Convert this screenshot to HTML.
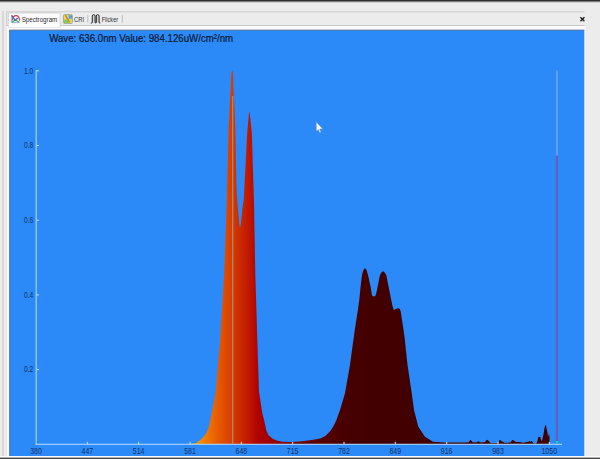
<!DOCTYPE html>
<html><head><meta charset="utf-8"><title>Spectrogram</title>
<style>
html,body{margin:0;padding:0;}
body{width:600px;height:459px;overflow:hidden;background:#ececec;position:relative;font-family:"Liberation Sans",sans-serif;}
svg{position:absolute;left:0;top:0;display:block}
svg text{font-family:"Liberation Sans",sans-serif;}
</style></head><body>
<svg width="600" height="459" viewBox="0 0 600 459" style="opacity:0.999">
<defs>
<linearGradient id="sg" gradientUnits="userSpaceOnUse" x1="190" y1="0" x2="550" y2="0"><stop offset="0.0000" stop-color="rgb(255, 190, 0)"/><stop offset="0.0278" stop-color="rgb(245, 140, 0)"/><stop offset="0.0556" stop-color="rgb(240, 110, 0)"/><stop offset="0.0833" stop-color="rgb(228, 85, 0)"/><stop offset="0.1167" stop-color="rgb(215, 60, 0)"/><stop offset="0.1389" stop-color="rgb(203, 42, 0)"/><stop offset="0.1667" stop-color="rgb(190, 20, 0)"/><stop offset="0.1889" stop-color="rgb(175, 2, 0)"/><stop offset="0.2083" stop-color="rgb(165, 0, 0)"/><stop offset="0.2500" stop-color="rgb(140, 0, 0)"/><stop offset="0.3056" stop-color="rgb(110, 0, 0)"/><stop offset="0.3611" stop-color="rgb(88, 0, 0)"/><stop offset="0.4028" stop-color="rgb(78, 0, 0)"/><stop offset="0.4444" stop-color="rgb(70, 0, 0)"/><stop offset="0.5278" stop-color="rgb(66, 0, 0)"/><stop offset="1.0000" stop-color="rgb(64, 0, 0)"/></linearGradient>
</defs>
<!-- window chrome -->
<rect x="0" y="0" width="600" height="459" fill="#ececec"/>
<rect x="0" y="0" width="600" height="1.6" fill="#2e2e2e"/>
<rect x="0" y="1.6" width="600" height="1" fill="#8a8a8a" opacity="0.5"/>
<!-- left splitter -->
<rect x="2.5" y="11" width="1" height="448" fill="#c4c4c4"/>
<!-- panel frame -->
<rect x="6" y="11.3" width="578.4" height="1.1" fill="#d0d0d0"/>
<rect x="6" y="11.3" width="1.2" height="446" fill="#d0d0d0"/>
<rect x="6.5" y="25.5" width="578" height="4.5" fill="#fafafa"/>
<rect x="6.5" y="25" width="578" height="1" fill="#c8c8c8"/>
<rect x="6.5" y="26" width="2.5" height="433" fill="#fafafa"/>
<!-- active tab -->
<rect x="8.3" y="13" width="51.7" height="14" fill="#fcfcfc" stroke="#cccccc" stroke-width="0.8"/>
<rect x="8.7" y="24" width="50.9" height="3" fill="#fcfcfc"/>
<!-- tab icons -->
<g fill="none">
<path d="M11.4 15 L11.4 22.6 L19.6 22.6" stroke="#8fb0e8" stroke-width="0.9"/>
<path d="M12.4 20.4 C13.2 14.2,18.6 13.8,19.8 20.6" stroke="#e03838" stroke-width="1.2"/>
<path d="M11.6 15.4 L15.2 20.4 L17.8 17.8" stroke="#2c5ccc" stroke-width="1.2"/>
<path d="M12 22.3 L15.6 19.8 L19.2 22.4" stroke="#2aa048" stroke-width="1.1"/>
</g>
<g>
<rect x="63.4" y="14.6" width="9" height="8.8" rx="1" fill="#dfe070" stroke="#8f9c88" stroke-width="0.8"/>
<path d="M64 23 L64 19.5 L67.5 19.8 L69 23 Z" fill="#86c860"/>
<rect x="68.6" y="15.2" width="3.4" height="3.6" fill="#5a9ee8"/>
<path d="M70 19 L72 19 L72 23 L69.4 23 Z" fill="#c8dc68"/>
<path d="M65.5 15.6 L69.2 21.6" stroke="#e87820" stroke-width="1.5" fill="none" stroke-linecap="round"/>
</g>
<rect x="92.6" y="15.6" width="2.6" height="7.4" fill="#d4d4d4"/><rect x="96.3" y="15.6" width="2.6" height="7.4" fill="#d4d4d4"/><path d="M90.8 23 H91.7 Q92.3 23 92.3 22.2 V16.1 Q92.3 14.7 93.6 14.7 H93.8 Q95.1 14.7 95.1 16.1 V22.2 Q95.1 23 95.7 23 Q96.3 23 96.3 22.2 V16.1 Q96.3 14.7 97.6 14.7 H97.8 Q99.1 14.7 99.1 16.1 V22.2 Q99.1 23 99.7 23 H100.4" fill="none" stroke="#1c1c1c" stroke-width="0.95" stroke-linejoin="round"/>
<g font-size="7.1px" fill="#2c2c30">
<text x="21.7" y="21.5" textLength="35.6" lengthAdjust="spacingAndGlyphs">Spectrogram</text>
<text x="74" y="21.5" textLength="10" lengthAdjust="spacingAndGlyphs">CRI</text>
<text x="101.7" y="21.5" textLength="16.4" lengthAdjust="spacingAndGlyphs">Flicker</text>
</g>
<rect x="87.2" y="15" width="1.2" height="7.5" fill="#c4c4c4"/>
<rect x="121.8" y="15" width="1.2" height="7.5" fill="#c4c4c4"/>
<!-- close x -->
<path d="M580.4 17.2 L584.4 21.2 M584.4 17.2 L580.4 21.2" stroke="#151515" stroke-width="1.3" fill="none"/>
<!-- right side -->
<rect x="584.3" y="26" width="1.2" height="433" fill="#fafafa"/>
<!-- chart -->
<rect x="9.5" y="30" width="574.8" height="426" fill="#2b8af7"/>
<rect x="9.3" y="29.6" width="575" height="0.9" fill="#6a7890"/>
<rect x="0" y="456" width="600" height="1.7" fill="#fbfbfb"/>
<rect x="0" y="457.6" width="600" height="1.4" fill="#484848"/>
<rect x="9.3" y="30" width="0.8" height="426" fill="#4a6898"/>
<!-- title -->
<text x="49.2" y="41.9" font-size="10.3px" fill="#0a1834" stroke="#0a1834" stroke-width="0.2" textLength="184" lengthAdjust="spacingAndGlyphs">Wave: 636.0nm Value: 984.126uW/cm²/nm</text>
<!-- spectrum -->
<polygon points="188.00,444.30 190.00,444.00 196.00,443.30 200.30,440.00 203.50,437.00 206.30,433.30 209.00,426.70 211.70,413.30 214.30,400.00 215.80,391.80 220.20,340.00 224.20,273.00 226.70,206.00 228.50,133.00 230.00,101.00 230.50,92.00 230.90,82.00 231.30,74.00 231.80,70.90 232.70,70.90 233.10,76.00 233.30,88.00 233.80,96.00 234.40,106.00 235.30,127.00 236.50,190.00 238.00,210.00 239.50,226.00 240.00,228.00 240.80,224.00 242.70,206.00 243.70,200.00 247.20,133.00 248.50,118.00 249.30,110.80 250.50,120.00 251.80,133.00 254.00,203.00 255.30,273.00 257.40,343.00 259.00,391.80 260.30,400.00 262.30,413.30 264.00,419.50 266.20,430.00 268.50,435.20 273.00,439.00 277.50,440.80 282.00,441.70 291.00,442.00 300.00,441.40 306.00,440.80 315.00,439.40 321.00,438.20 325.50,435.70 330.00,431.50 333.00,427.00 336.00,421.00 338.20,415.00 340.00,410.00 345.00,393.30 350.00,364.75 352.00,350.00 353.75,337.50 355.50,325.00 357.50,312.50 359.25,300.00 360.50,287.50 362.00,275.00 363.50,270.00 365.00,268.00 366.50,270.00 368.00,275.00 370.75,287.50 371.80,294.50 372.60,296.30 375.20,296.30 376.20,293.50 377.50,287.50 380.00,275.00 381.80,272.00 383.00,271.25 384.30,272.00 386.25,275.00 388.75,287.50 391.25,300.00 392.50,306.00 393.75,310.00 395.50,309.30 397.00,308.50 398.50,308.25 399.80,309.00 400.70,311.50 401.20,314.50 402.80,325.00 404.60,337.50 405.90,350.00 407.50,364.75 411.70,393.00 414.00,410.00 418.30,426.70 425.00,436.70 433.00,441.70 445.00,442.50 465.00,442.50 468.70,442.30 469.80,440.50 470.50,439.70 471.30,440.50 472.50,442.20 476.00,442.50 477.50,441.80 478.30,441.20 479.20,441.80 480.50,442.50 484.00,442.30 485.20,441.80 486.40,440.30 487.20,439.70 488.00,440.30 489.70,442.30 491.00,443.20 496.70,443.30 498.50,442.50 499.30,440.40 500.00,439.70 500.80,440.40 502.00,441.60 503.30,442.00 504.50,442.80 508.00,442.70 510.80,442.20 511.80,440.50 512.80,439.70 513.80,440.50 515.80,442.00 520.00,442.00 522.00,442.60 524.00,442.80 526.00,442.00 528.60,441.80 529.40,441.10 530.40,441.80 531.60,441.10 532.60,442.00 533.50,443.60 536.00,443.80 537.30,441.80 538.00,438.60 538.40,437.10 540.30,437.10 540.80,439.00 541.50,440.90 542.30,440.00 542.90,437.00 543.60,433.80 544.40,428.50 545.00,425.80 545.50,425.10 546.00,425.80 546.60,428.50 547.40,432.30 548.00,436.00 548.50,436.00 548.80,434.10 549.20,434.10 549.50,437.00 549.60,444.30" fill="url(#sg)"/>
<!-- axes -->
<rect x="35.650000000000006" y="70" width="1.1" height="374.8" fill="#acd6ff"/>
<rect x="35.650000000000006" y="443.75" width="526.3499999999999" height="1.1" fill="#acd6ff"/>
<rect x="86.83" y="441.80" width="1" height="2.5" fill="#cfe8ff"/><rect x="138.16" y="441.80" width="1" height="2.5" fill="#cfe8ff"/><rect x="189.49" y="441.80" width="1" height="2.5" fill="#cfe8ff"/><rect x="240.82" y="441.80" width="1" height="2.5" fill="#cfe8ff"/><rect x="292.15" y="441.80" width="1" height="2.5" fill="#cfe8ff"/><rect x="343.48" y="441.80" width="1" height="2.5" fill="#cfe8ff"/><rect x="394.81" y="441.80" width="1" height="2.5" fill="#cfe8ff"/><rect x="446.14" y="441.80" width="1" height="2.5" fill="#cfe8ff"/><rect x="497.47" y="441.80" width="1" height="2.5" fill="#cfe8ff"/><rect x="548.80" y="441.80" width="1" height="2.5" fill="#cfe8ff"/><rect x="36.70" y="70.30" width="2.2" height="1" fill="#cfe8ff"/><rect x="36.70" y="145.00" width="2.2" height="1" fill="#cfe8ff"/><rect x="36.70" y="219.70" width="2.2" height="1" fill="#cfe8ff"/><rect x="36.70" y="294.40" width="2.2" height="1" fill="#cfe8ff"/><rect x="36.70" y="369.10" width="2.2" height="1" fill="#cfe8ff"/>
<g font-size="8.3px" fill="#10306a"><text x="30.20" y="454.1" textLength="11.6" lengthAdjust="spacingAndGlyphs">380</text><text x="81.53" y="454.1" textLength="11.6" lengthAdjust="spacingAndGlyphs">447</text><text x="132.86" y="454.1" textLength="11.6" lengthAdjust="spacingAndGlyphs">514</text><text x="184.19" y="454.1" textLength="11.6" lengthAdjust="spacingAndGlyphs">581</text><text x="235.52" y="454.1" textLength="11.6" lengthAdjust="spacingAndGlyphs">648</text><text x="286.85" y="454.1" textLength="11.6" lengthAdjust="spacingAndGlyphs">715</text><text x="338.18" y="454.1" textLength="11.6" lengthAdjust="spacingAndGlyphs">782</text><text x="389.51" y="454.1" textLength="11.6" lengthAdjust="spacingAndGlyphs">849</text><text x="440.84" y="454.1" textLength="11.6" lengthAdjust="spacingAndGlyphs">916</text><text x="492.17" y="454.1" textLength="11.6" lengthAdjust="spacingAndGlyphs">983</text><text x="541.45" y="454.1" textLength="15.7" lengthAdjust="spacingAndGlyphs">1050</text><text x="24" y="73.60" textLength="9.3" lengthAdjust="spacingAndGlyphs">1.0</text><text x="24" y="148.30" textLength="9.3" lengthAdjust="spacingAndGlyphs">0.8</text><text x="24" y="223.00" textLength="9.3" lengthAdjust="spacingAndGlyphs">0.6</text><text x="24" y="297.70" textLength="9.3" lengthAdjust="spacingAndGlyphs">0.4</text><text x="24" y="372.40" textLength="9.3" lengthAdjust="spacingAndGlyphs">0.2</text></g>
<!-- cursor line -->
<rect x="232.1" y="96" width="1.2" height="348" fill="#a09692" fill-opacity="0.9"/>
<!-- right marker -->
<rect x="556.4" y="70.7" width="1.2" height="85" fill="#86b0f2"/>
<rect x="556.3" y="155.6" width="1.4" height="288.4" fill="#82489a"/>
<rect x="556" y="441" width="2" height="2.9" fill="#34c8a4"/>
<!-- mouse cursor -->
<path d="M316.3 122.3 L316.3 131.2 L318.3 129.4 L319.8 132.8 L321 132.2 L319.6 129 L322.6 128.8 Z" fill="#ffffff" stroke="#6a90c8" stroke-width="0.5"/>
</svg>
</body></html>
